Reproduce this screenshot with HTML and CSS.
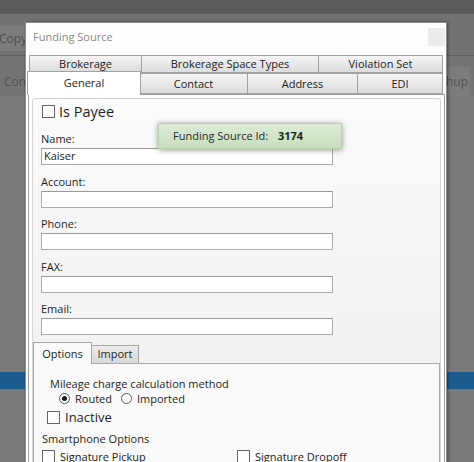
FILE: index.html
```html
<!DOCTYPE html>
<html lang="en">
<head>
  <meta charset="UTF-8">
  <title>Funding Source</title>
  <link rel="stylesheet" href="styles.css">
</head>
<body>

  <div class="app">
    <div class="app-title"></div>
    <div class="app-toolbar"><span class="app-btn">Copy</span></div>
    <div class="app-tabs">
      <span class="app-tab">Con</span>
      <span class="app-tab-right">hup</span>
    </div>
    <div class="app-grid">
      <div class="app-row selected"></div>
    </div>
  </div>

  <div class="dialog">
    <div class="titlebar">
      <span class="title">Funding Source</span>
      <span class="close"></span>
    </div>

    <div class="tabrow back">
      <div class="tab t-brokerage">Brokerage</div>
      <div class="tab t-space">Brokerage Space Types</div>
      <div class="tab t-violation">Violation Set</div>
    </div>
    <div class="tabrow front">
      <div class="tab t-general active">General</div>
      <div class="tab t-contact">Contact</div>
      <div class="tab t-address">Address</div>
      <div class="tab t-edi">EDI</div>
    </div>

    <div class="panel">
      <div class="group">
        <div class="form">
          <div class="payee">
            <span class="check"></span>
            <span>Is Payee</span>
          </div>

          <div class="field first">
            <label>Name:</label>
            <div class="input">Kaiser</div>
          </div>
          <div class="field">
            <label>Account:</label>
            <div class="input"></div>
          </div>
          <div class="field">
            <label>Phone:</label>
            <div class="input"></div>
          </div>
          <div class="field">
            <label>FAX:</label>
            <div class="input"></div>
          </div>
          <div class="field">
            <label>Email:</label>
            <div class="input"></div>
          </div>
        </div>

        <div class="lower">
          <div class="subtabs">
            <div class="subtab active">Options</div>
            <div class="subtab">Import</div>
          </div>
          <div class="subpanel">
            <div class="mileage">Mileage charge calculation method</div>
            <div class="radios">
              <span class="radio checked"></span><span class="radio-text">Routed</span>
              <span class="radio"></span><span class="radio-text">Imported</span>
            </div>
            <div class="inactive">
              <span class="check"></span>
              <span>Inactive</span>
            </div>
            <div class="smart">Smartphone Options</div>
            <div class="sig">
              <div class="sig-item"><span class="check"></span><span>Signature Pickup</span></div>
              <div class="sig-item"><span class="check"></span><span>Signature Dropoff</span></div>
            </div>
          </div>
        </div>
      </div>
    </div>

    <div class="id-tip">Funding Source Id: <b>3174</b></div>
  </div>

</body>
</html>
```

FILE: styles.css
```css
body {
  margin: 0;
  width: 474px;
  height: 462px;
  overflow: hidden;
  position: relative;
  background: #787878;
  font-family: "Open Sans", sans-serif;
  font-size: 11px;
  color: #1e1e1e;
}

/* dimmed application behind the dialog */
.app {
  height: 462px;
  display: flex;
  flex-direction: column;
  filter: blur(0.6px);
}
.app-title {
  height: 14px;
  background: #5b5b5b;
}
.app-toolbar {
  height: 42px;
  background: #727272;
  border-bottom: 1px solid #5f5f5f;
  display: flex;
  align-items: center;
  padding-top: 8px;
  box-sizing: border-box;
}
.app-btn {
  margin-left: -3px;
  padding: 4px 2px;
  background: #7d7d7d;
  color: #4c4c4c;
  font-size: 12px;
}
.app-tabs {
  height: 40px;
  background: #747474;
  display: flex;
  justify-content: space-between;
  align-items: center;
  padding-top: 10px;
  box-sizing: border-box;
  color: #525252;
  font-size: 12px;
}
.app-tab {
  margin-left: 4px;
}
.app-tab-right {
  margin-right: 4px;
  padding: 6px 2px;
  background: #7c7c7c;
}
.app-grid {
  flex: 1;
  padding-top: 276px;
  background: #7a7a7a;
}
.app-row.selected {
  height: 17px;
  background: #1d5a8e;
}

/* dialog */
.dialog {
  position: absolute;
  left: 25px;
  top: 22px;
  width: 422px;
  height: 460px;
  box-sizing: border-box;
  border: 1px solid #8c8c8c;
  background: #fdfdfd;
  box-shadow: 1px 0 3px rgba(0, 0, 0, 0.4);
  display: flex;
  flex-direction: column;
}
.titlebar {
  height: 32px;
  flex: none;
  display: flex;
  justify-content: space-between;
  align-items: flex-start;
}
.title {
  padding: 6px 0 0 7px;
  line-height: 15px;
  color: #8a8a8a;
}
.close {
  width: 17px;
  height: 18px;
  margin: 5px 1px 0 0;
  background: #ebebeb;
}

.tabrow {
  display: flex;
  flex: none;
}
.tabrow.back {
  height: 18px;
  margin-left: 3px;
}
.tabrow.front {
  height: 21px;
  margin-left: 2px;
}
.tab {
  box-sizing: border-box;
  height: 100%;
  border: 1px solid #a2a2a2;
  margin-left: -1px;
  background: linear-gradient(#f5f5f5, #dcdcdc);
  text-align: center;
  color: #1c1c1c;
}
.tab:first-child {
  margin-left: 0;
}
.back .tab {
  line-height: 16px;
}
.front .tab {
  line-height: 19px;
}
.t-brokerage { width: 113px; }
.t-space { width: 178px; }
.t-violation { width: 125px; }
.t-general { width: 112px; }
.t-contact { width: 109px; }
.t-address { width: 111px; }
.t-edi { width: 86px; }

.front .tab.active {
  position: relative;
  z-index: 2;
  width: 114px;
  height: 24px;
  margin: -2px -1px 0 -1px;
  border-bottom: none;
  background: #fff;
  line-height: 21px;
}

.panel {
  flex: 1;
  margin: 0 1px 0 2px;
  border: 1px solid #9d9d9d;
  border-bottom: none;
  background: #fff;
  display: flex;
  flex-direction: column;
}
.group {
  flex: 1;
  margin: 3px 3px 0 3px;
  border: 1px solid #d6d6d6;
  border-bottom: none;
  border-radius: 3px 3px 0 0;
  background: linear-gradient(#fbfbfb, #eeeeee);
  display: flex;
  flex-direction: column;
}

.form {
  padding-left: 8px;
}
.check {
  display: inline-block;
  width: 13px;
  height: 13px;
  box-sizing: border-box;
  border: 1px solid #666;
  background: #fff;
  flex: none;
}
.payee {
  display: flex;
  align-items: center;
  height: 17px;
  margin-top: 4px;
  font-size: 14.5px;
}
.payee .check {
  margin: 0 4px 0 1px;
}

.field label {
  display: block;
  line-height: 16px;
  margin-top: 8.5px;
}
.field.first label {
  margin-top: 11px;
}
.input {
  width: 292px;
  height: 17px;
  margin-top: 1px;
  box-sizing: border-box;
  border: 1px solid #ababab;
  border-top-color: #9a9a9a;
  background: #fff;
  padding-left: 2px;
  line-height: 14px;
}

.lower {
  flex: 1;
  margin-top: 7px;
  display: flex;
  flex-direction: column;
}
.subtabs {
  display: flex;
  align-items: flex-end;
  height: 21px;
}
.subtab {
  box-sizing: border-box;
  width: 48px;
  height: 18px;
  margin-left: -1px;
  border: 1px solid #a5a5a5;
  border-bottom: none;
  background: linear-gradient(#ececec, #d9d9d9);
  line-height: 16px;
  text-align: center;
}
.subtab.active {
  position: relative;
  z-index: 2;
  width: 59px;
  height: 22px;
  margin: 0 0 -1px 0;
  background: #fafafa;
  line-height: 21px;
}
.subpanel {
  flex: 1;
  border: 1px solid #a9a9a9;
  border-bottom: none;
  background: #f9f9f9;
}
.mileage {
  margin: 11.5px 0 0 16px;
  line-height: 15px;
}
.radios {
  display: flex;
  align-items: center;
  height: 15px;
  margin-left: 25px;
}
.radio {
  width: 11px;
  height: 11px;
  box-sizing: border-box;
  border: 1px solid #555;
  border-radius: 50%;
  background: #fff;
  position: relative;
  flex: none;
}
.radio.checked::after {
  content: "";
  position: absolute;
  left: 2px;
  top: 2px;
  width: 5px;
  height: 5px;
  border-radius: 50%;
  background: #1a1a1a;
}
.radio-text {
  margin: 0 9px 0 5px;
}
.inactive {
  display: flex;
  align-items: center;
  height: 16px;
  margin: 3.5px 0 0 13px;
  font-size: 13px;
}
.inactive .check {
  margin-right: 5px;
}
.smart {
  margin: 5.5px 0 0 8px;
  line-height: 15px;
}
.sig {
  display: flex;
  margin: 4.5px 0 0 8px;
}
.sig-item {
  width: 195px;
  display: flex;
  align-items: flex-start;
  line-height: 14px;
}
.sig-item .check {
  margin-right: 5px;
}

/* the id badge floats over the form */
.id-tip {
  position: absolute;
  left: 132px;
  top: 100px;
  width: 184px;
  height: 26px;
  box-sizing: border-box;
  border: 1px solid #b9d0b0;
  background: linear-gradient(#dcecd5, #c8ddbf);
  box-shadow: 0 1px 6px rgba(0, 0, 0, 0.4);
  padding-left: 14px;
  line-height: 24px;
  color: #2a2a2a;
}
.id-tip b {
  margin-left: 7px;
  color: #1b2a1b;
}
```
